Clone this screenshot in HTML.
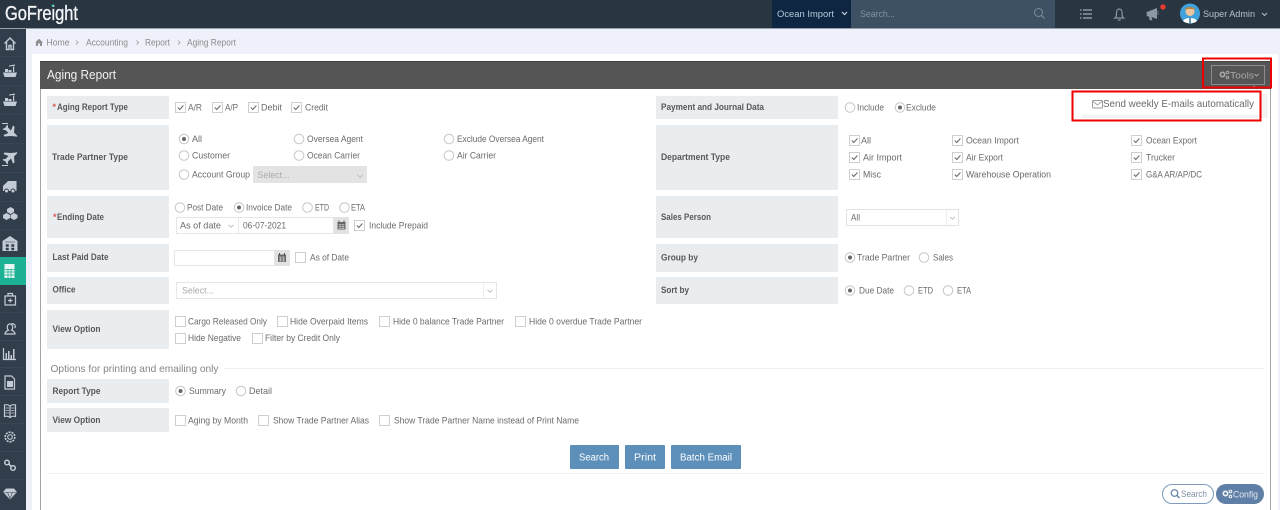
<!DOCTYPE html>
<html lang="en"><head><meta charset="utf-8"><title>Aging Report</title>
<style>
html,body{margin:0;padding:0;width:1280px;height:510px;overflow:hidden;background:#eef1f9}
svg{display:block;filter:blur(.38px)}
text{font-family:"Liberation Sans",sans-serif;font-size:9.2px;fill:#6b6b6b}
.b{font-weight:bold;fill:#585858;font-size:9px}
.n{fill:#c3ccd6;stroke:none}
.l{fill:none;stroke:#c3ccd6;stroke-width:1.2}
.h{fill:none;stroke:#8b98a6;stroke-width:1.2}
</style></head><body>
<svg width="1280" height="510" viewBox="0 0 1280 510" xmlns="http://www.w3.org/2000/svg">
<defs>
<g id="cb"><rect x=".5" y=".5" width="10" height="10" fill="#fff" stroke="#cfcfcf"/><path d="M2.800 5.500l2 2 3.600-4" fill="none" stroke="#666" stroke-width="1"/></g>
<g id="cu"><rect x=".5" y=".5" width="10" height="10" fill="#fff" stroke="#cfcfcf"/></g>
<g id="ru"><circle cx="5.500" cy="5.500" r="4.800" fill="#fff" stroke="#c8c8c8"/></g>
<g id="rc"><circle cx="5.500" cy="5.500" r="4.800" fill="#fff" stroke="#c8c8c8"/><circle cx="5.500" cy="5.500" r="2" fill="#666"/></g>
<g id="cal"><path d="M-4 -3.500h8v7.500h-8z" fill="#666"/><path d="M-3 -1h6M-3 1h6M-3 3h6M-1.500 -1v4.500M1.500 -1v4.500" stroke="#ddd" stroke-width=".6"/><path d="M-2.500 -5v2M2.500 -5v2" stroke="#555" stroke-width="1"/></g>
<g id="dn"><path d="M-2.500 -1.200l2.500 2.500 2.500 -2.500" fill="none" stroke="#b5b5b5" stroke-width=".8"/></g>
<g id="ship"><path class="n" d="M-7 1.500h14l-1.500 4.500h-11zM-5 -2h3v3h-3zM-1.500 -1h3v2h-3zM3 -4.500h1.200v5.500h-1.200zM-1 -5.500l6 -1v1.200l-6 .8z"/></g>
<g id="plane"><path class="n" d="M6 -6.500c1 -.5 1.500 0 1 1l-3 3 .5 6-1.500 1-2 -5-3 3v2l-1 .8-1.500 -2.800-2.800 -1.500.8 -1h2l3 -3-5 -2 1 -1.500 6 .5z"/><path class="n" d="M-8 6h6v1h-6z"/></g>
<g id="gear"><circle cx="-1.500" cy="-.5" r="2.200" fill="none" stroke="currentColor" stroke-width="1.600"/><circle cx="3.500" cy="-2.500" r="1.300" fill="none" stroke="currentColor" stroke-width="1"/><circle cx="3.500" cy="2.500" r="1.300" fill="none" stroke="currentColor" stroke-width="1"/></g>
</defs>

<!-- page background -->
<rect width="1280" height="510" fill="#eef1f9"/>
<!-- top bar -->
<rect width="1280" height="28" fill="#2a3542"/>
<rect y="28" width="1280" height="1" fill="#9aa3ad"/>
<text x="5" y="20" textLength="73" lengthAdjust="spacingAndGlyphs" style="font-size:20px;fill:#f2f4f6;stroke:#f2f4f6;stroke-width:.35">GoFreight</text>
<rect x="51.500" y="4.500" width="2" height="2" fill="#23b3a0"/>
<rect x="772" width="79" height="28" fill="#0f2643"/>
<text x="777" y="17" textLength="57" lengthAdjust="spacingAndGlyphs" style="fill:#b6c8da;font-size:9.500px">Ocean Import</text>
<path d="M842 12l2.500 2.500 2.500-2.500" fill="none" stroke="#c8d4e0" stroke-width="1.200"/>
<rect x="851" width="204" height="28" fill="#3e5064"/>
<text x="860" y="17" textLength="35" lengthAdjust="spacingAndGlyphs" style="fill:#8093a6;font-size:9.500px">Search...</text>
<circle cx="1038.500" cy="12.500" r="4" fill="none" stroke="#7a8b9c" stroke-width="1"/><path d="M1041.500 15.500l3 3" stroke="#7a8b9c" stroke-width="1.200"/>
<path class="h" style="stroke-width:1.500" d="M1083 10h9M1083 14h9M1083 18h9"/><path d="M1080 10h1.500M1080 14h1.500M1080 18h1.500" stroke="#8b98a6" stroke-width="1.500"/>
<path class="h" d="M1115 18c1.500-1 1.500-2.500 1.500-5 0-2.500 1.200-4 2.800-4s2.800 1.500 2.800 4c0 2.500 0 4 1.500 5zM1118 19.500c.5 1 2 1 2.500 0"/>
<path d="M1147 12l10-4v11l-10-3.500z" fill="#8b98a6"/><path d="M1147 12h3v4h-3zM1149 16l1 4h2l-1-3.500M1158 11v4" fill="#8b98a6" stroke="#8b98a6" stroke-width=".6"/>
<circle cx="1163" cy="7" r="2.700" fill="#e8392c"/>
<circle cx="1190" cy="13.500" r="10" fill="#3fa2dc"/><circle cx="1190" cy="11.500" r="4.500" fill="#efc49c"/><path d="M1185 10c0-4 10-4 10 0-3-1.500-7-1.500-10 0z" fill="#b5843f"/><path d="M1183 21c2-4 12-4 14 0-3 3-11 3-14 0z" fill="#fff"/><path d="M1190 18v5" stroke="#2a6f9e" stroke-width="1.500"/>
<text x="1203" y="17" textLength="52" lengthAdjust="spacingAndGlyphs" style="fill:#b7c2cd;font-size:9.500px">Super Admin</text>
<path d="M1262 13l2.500 2.500 2.500-2.500" fill="none" stroke="#b7c2cd" stroke-width="1"/>

<!-- sidebar -->
<rect y="29" width="26" height="481" fill="#333e4d"/>
<path d="M0 56.500h26M0 85.500h26M0 114.500h26M0 143.500h26M0 172.500h26M0 201.500h26M0 229.500h26M0 257.500h26M0 284.500h26M0 312.500h26M0 340.500h26M0 367.500h26M0 395.500h26M0 423.500h26M0 451.500h26M0 479.500h26" stroke="#3b4655" stroke-width="1"/>
<rect y="257" width="26" height="28" fill="#1db195"/>
<path class="l" style="stroke-width:1.400" d="M4.500 43.500l5.500-5.500 5.500 5.500M6.500 42v7.500h2.500v-4h2v4h2.500v-7.500"/>
<use href="#ship" x="10" y="71"/>
<use href="#ship" x="10" y="100"/>
<g transform="translate(10 130) scale(1 -1)"><use href="#plane"/></g>
<use href="#plane" x="10" y="159"/>
<path class="n" d="M8 181h8.500v10h-13.500v-5zM3.500 186l3.500-3.500h.5v3.500z"/><circle cx="6.500" cy="191" r="2" fill="#c3ccd6" stroke="#333e4d"/><circle cx="13" cy="191" r="2" fill="#c3ccd6" stroke="#333e4d"/>
<path class="n" d="M7 209l3.500-2 3.500 2v3l-3.500 2-3.500-2zM3 215l3.500-2 3.500 2v3l-3.500 2-3.500-2zM10.500 215l3.500-2 3.500 2v3l-3.500 2-3.500-2z"/>
<path class="n" d="M2.500 241l7.500-5 7.500 5v10h-15z"/><path d="M5 242h10M6 244.500h2.500v2h-2.500zM11.500 244.500h2.500v2h-2.500zM6 248h2.500v2h-2.500zM11.500 248h2.500v2h-2.500z" fill="#333e4d" stroke="#333e4d" stroke-width=".5"/>
<rect x="4.500" y="264" width="10" height="14" fill="#e9f7f4"/><path d="M5 269.500h9.500M5 272h9.500M5 275h9.500M8 269v9M11 269v9" stroke="#1db195" stroke-width=".8"/>
<path class="l" d="M5 296h10.500v9h-10.500zM8 296v-2.500h4.500v2.500M8 300.500h4.500M10.300 298.500v4"/>
<path class="l" d="M5 334c0-2.500 2-3 3.500-3.800-1.800-1.500-1.800-6.200 1.500-6.200s3.300 4.700 1.500 6.200c1.500.8 3.500 1.300 3.500 3.800zM11 324c3-1 5 1 4 4"/>
<path class="l" d="M3.500 348v11.500h12.500"/><path class="n" d="M5.500 353h1.500v6h-1.500zM8 351h1.500v8h-1.500zM10.500 355h1.500v4h-1.500zM13 349h1.500v10h-1.500z"/>
<path class="l" d="M5 376h6.500l3 3v10h-9.500z"/><rect x="7" y="381" width="6" height="6" fill="#c3ccd6"/>
<path class="l" d="M10 406c-2-1.500-4-1.500-5.500-1v11.500c1.500-.5 3.500-.5 5.500 1 2-1.500 4-1.500 5.500-1v-11.500c-1.500-.5-3.500-.5-5.500 1zM10 406v11.500"/><path d="M5.500 408h3.500M5.500 410.500h3.500M5.500 413h3.500M11 408h3.500M11 410.500h3.500M11 413h3.500" stroke="#c3ccd6" stroke-width=".7"/>
<circle cx="10" cy="437" r="2.300" class="l"/><circle cx="10" cy="437" r="4.800" fill="none" stroke="#c3ccd6" stroke-width="1.600" stroke-dasharray="2 1"/>
<circle cx="7" cy="462.500" r="2.300" class="l" style="stroke-width:1.500"/><circle cx="13" cy="468" r="2.300" class="l" style="stroke-width:1.500"/><path d="M8.500 464l3 2.500" stroke="#c3ccd6" stroke-width="1.500"/>
<path class="n" d="M6 488.500h8l3 3.500-7 7.500-7-7.500z"/><path d="M3.500 492.500h13M7.500 492.500l2.500 6 2.500-6" fill="none" stroke="#333e4d" stroke-width=".6"/>

<!-- breadcrumb -->
<path d="M35 42.500l4-3.800 4 3.800h-1v3.500h-2v-2.500h-2v2.500h-2v-3.500z" fill="#8f8f8f"/>
<text x="46.500" y="45.500" textLength="23" lengthAdjust="spacingAndGlyphs" style="fill:#8b8b8b">Home</text>
<text x="86" y="45.500" textLength="42" lengthAdjust="spacingAndGlyphs" style="fill:#8b8b8b">Accounting</text>
<text x="145" y="45.500" textLength="25" lengthAdjust="spacingAndGlyphs" style="fill:#8b8b8b">Report</text>
<text x="187" y="45.500" textLength="49" lengthAdjust="spacingAndGlyphs" style="fill:#8b8b8b">Aging Report</text>
<path d="M76 40.500l2 2-2 2M136.500 40.500l2 2-2 2M178 40.500l2 2-2 2" fill="none" stroke="#999" stroke-width=".8"/>

<!-- panel -->
<rect x="32" y="54" width="1246" height="456" fill="#fff"/>
<rect x="40" y="61" width="1231" height="28" fill="#555"/>
<rect x="40" y="61" width="1231" height="1" fill="#444"/>
<path d="M40.500 89v421M1270.500 89v421" stroke="#a5a5a5" stroke-width="1"/>
<text x="47" y="79" textLength="69" lengthAdjust="spacingAndGlyphs" style="font-size:12.500px;fill:#f2f2f2">Aging Report</text>

<!-- tools -->
<rect x="1211.500" y="65.500" width="53" height="19" fill="none" stroke="#8c8c8c"/>
<g color="#a9a9a9" transform="translate(1224 75)"><use href="#gear"/></g>
<text x="1230" y="78.500" textLength="24" lengthAdjust="spacingAndGlyphs" style="fill:#a9a9a9;font-size:9.500px">Tools</text>
<path d="M1254.500 74l2 2 2-2" fill="none" stroke="#a9a9a9" stroke-width=".9"/>
<path d="M1252 87l2-1.500 2 1.500z" fill="#bbb"/>

<!-- label cells -->
<g fill="#e9edef">
<rect x="47" y="96" width="122" height="23"/><rect x="47" y="125" width="122" height="65"/><rect x="47" y="196" width="122" height="42"/><rect x="47" y="244" width="122" height="28"/><rect x="47" y="277" width="122" height="27"/><rect x="47" y="310" width="122" height="39"/><rect x="47" y="379" width="122" height="24"/><rect x="47" y="408" width="122" height="24"/>
<rect x="656" y="96" width="182" height="23"/><rect x="656" y="125" width="182" height="65"/><rect x="656" y="196" width="182" height="42"/><rect x="656" y="244" width="182" height="28"/><rect x="656" y="277" width="182" height="27"/>
</g>
<text x="52.500" y="110" style="fill:#e05a5a" class="b">*</text>
<text x="57" y="110" textLength="71" lengthAdjust="spacingAndGlyphs" class="b">Aging Report Type</text>
<text x="52" y="160" textLength="76" lengthAdjust="spacingAndGlyphs" class="b">Trade Partner Type</text>
<text x="53" y="220" style="fill:#e05a5a" class="b">*</text>
<text x="57" y="220" textLength="47" lengthAdjust="spacingAndGlyphs" class="b">Ending Date</text>
<text x="52.500" y="260" textLength="56" lengthAdjust="spacingAndGlyphs" class="b">Last Paid Date</text>
<text x="52.500" y="292.500" textLength="23" lengthAdjust="spacingAndGlyphs" class="b">Office</text>
<text x="52.500" y="332" textLength="48" lengthAdjust="spacingAndGlyphs" class="b">View Option</text>
<text x="52.500" y="394" textLength="48" lengthAdjust="spacingAndGlyphs" class="b">Report Type</text>
<text x="52.500" y="423" textLength="48" lengthAdjust="spacingAndGlyphs" class="b">View Option</text>
<text x="661" y="110" textLength="103" lengthAdjust="spacingAndGlyphs" class="b">Payment and Journal Data</text>
<text x="661" y="160" textLength="69" lengthAdjust="spacingAndGlyphs" class="b">Department Type</text>
<text x="661" y="220" textLength="50" lengthAdjust="spacingAndGlyphs" class="b">Sales Person</text>
<text x="661" y="260.500" textLength="37" lengthAdjust="spacingAndGlyphs" class="b">Group by</text>
<text x="661" y="293" textLength="28" lengthAdjust="spacingAndGlyphs" class="b">Sort by</text>

<!-- Aging report type -->
<use href="#cb" x="175" y="102"/><text x="188" y="110.500" textLength="14" lengthAdjust="spacingAndGlyphs">A/R</text>
<use href="#cb" x="212" y="102"/><text x="225" y="110.500" textLength="13" lengthAdjust="spacingAndGlyphs">A/P</text>
<use href="#cb" x="248" y="102"/><text x="261" y="110.500" textLength="21" lengthAdjust="spacingAndGlyphs">Debit</text>
<use href="#cb" x="291" y="102"/><text x="305" y="110.500" textLength="23" lengthAdjust="spacingAndGlyphs">Credit</text>

<!-- Trade partner type -->
<use href="#rc" x="178.500" y="133.500"/><text x="192" y="142" textLength="10" lengthAdjust="spacingAndGlyphs">All</text>
<use href="#ru" x="293.500" y="133.500"/><text x="307" y="142" textLength="56" lengthAdjust="spacingAndGlyphs">Oversea Agent</text>
<use href="#ru" x="443.500" y="133.500"/><text x="457" y="142" textLength="87" lengthAdjust="spacingAndGlyphs">Exclude Oversea Agent</text>
<use href="#ru" x="178.500" y="150"/><text x="192" y="158.500" textLength="38" lengthAdjust="spacingAndGlyphs">Customer</text>
<use href="#ru" x="293.500" y="150"/><text x="307" y="158.500" textLength="53" lengthAdjust="spacingAndGlyphs">Ocean Carrier</text>
<use href="#ru" x="443.500" y="150"/><text x="457" y="158.500" textLength="39" lengthAdjust="spacingAndGlyphs">Air Carrier</text>
<use href="#ru" x="178.500" y="169"/><text x="192" y="177.500" textLength="58" lengthAdjust="spacingAndGlyphs">Account Group</text>
<rect x="253" y="166" width="114" height="17" fill="#e3e3e3"/>
<text x="257.500" y="178" textLength="32" lengthAdjust="spacingAndGlyphs" style="fill:#aaa">Select...</text>
<use href="#dn" x="360" y="176"/>

<!-- Ending date -->
<use href="#ru" x="174.500" y="202"/><text x="187" y="210.500" textLength="36" lengthAdjust="spacingAndGlyphs">Post Date</text>
<use href="#rc" x="233.500" y="202"/><text x="246" y="210.500" textLength="46" lengthAdjust="spacingAndGlyphs">Invoice Date</text>
<use href="#ru" x="302" y="202"/><text x="315" y="210.500" textLength="14" lengthAdjust="spacingAndGlyphs">ETD</text>
<use href="#ru" x="339" y="202"/><text x="351" y="210.500" textLength="14" lengthAdjust="spacingAndGlyphs">ETA</text>
<rect x="176.500" y="217.500" width="157" height="16" fill="#fff" stroke="#e6e6e6"/>
<path d="M238.500 218v15" stroke="#e6e6e6"/>
<text x="180" y="228.500" textLength="41" lengthAdjust="spacingAndGlyphs">As of date</text>
<use href="#dn" x="231" y="226"/>
<text x="243" y="228.500" textLength="43" lengthAdjust="spacingAndGlyphs">06-07-2021</text>
<rect x="334" y="217" width="15" height="17" fill="#e2e2e2"/>
<use href="#cal" x="341.500" y="225.500"/>
<use href="#cb" x="354" y="220"/><text x="369" y="228.500" textLength="59" lengthAdjust="spacingAndGlyphs">Include Prepaid</text>

<!-- Last paid -->
<rect x="174.500" y="250.500" width="100" height="15" fill="#fff" stroke="#e6e6e6"/>
<rect x="274" y="250" width="16" height="16" fill="#e2e2e2"/>
<use href="#cal" x="282" y="258"/>
<use href="#cu" x="295" y="252"/><text x="310" y="260.500" textLength="39" lengthAdjust="spacingAndGlyphs">As of Date</text>

<!-- Office -->
<rect x="176.500" y="282.500" width="320" height="16" fill="#fff" stroke="#e6e6e6"/>
<path d="M483.500 283v15" stroke="#f0f0f0"/>
<text x="182" y="293.500" textLength="32" lengthAdjust="spacingAndGlyphs" style="fill:#aaa">Select...</text>
<use href="#dn" x="490" y="291"/>

<!-- View option -->
<use href="#cu" x="175" y="316"/><text x="188" y="324.500" textLength="79" lengthAdjust="spacingAndGlyphs">Cargo Released Only</text>
<use href="#cu" x="277" y="316"/><text x="290" y="324.500" textLength="78" lengthAdjust="spacingAndGlyphs">Hide Overpaid Items</text>
<use href="#cu" x="379" y="316"/><text x="393" y="324.500" textLength="111" lengthAdjust="spacingAndGlyphs">Hide 0 balance Trade Partner</text>
<use href="#cu" x="515" y="316"/><text x="529" y="324.500" textLength="113" lengthAdjust="spacingAndGlyphs">Hide 0 overdue Trade Partner</text>
<use href="#cu" x="175" y="333"/><text x="188" y="341" textLength="53" lengthAdjust="spacingAndGlyphs">Hide Negative</text>
<use href="#cu" x="252" y="333"/><text x="265" y="341" textLength="75" lengthAdjust="spacingAndGlyphs">Filter by Credit Only</text>

<!-- Options -->
<text x="50.500" y="372" textLength="168" lengthAdjust="spacingAndGlyphs" style="font-size:10.500px;fill:#858585">Options for printing and emailing only</text>
<path d="M224 368.500h1040" stroke="#eee"/>
<use href="#rc" x="175" y="385.500"/><text x="189" y="394" textLength="37" lengthAdjust="spacingAndGlyphs">Summary</text>
<use href="#ru" x="235.500" y="385.500"/><text x="249" y="394" textLength="23" lengthAdjust="spacingAndGlyphs">Detail</text>
<use href="#cu" x="175" y="415"/><text x="188" y="423.500" textLength="60" lengthAdjust="spacingAndGlyphs">Aging by Month</text>
<use href="#cu" x="258" y="415"/><text x="273" y="423.500" textLength="96" lengthAdjust="spacingAndGlyphs">Show Trade Partner Alias</text>
<use href="#cu" x="379" y="415"/><text x="394" y="423.500" textLength="185" lengthAdjust="spacingAndGlyphs">Show Trade Partner Name instead of Print Name</text>

<!-- Payment -->
<use href="#ru" x="844.500" y="102"/><text x="857" y="110.500" textLength="27" lengthAdjust="spacingAndGlyphs">Include</text>
<use href="#rc" x="894.500" y="102"/><text x="906" y="110.500" textLength="30" lengthAdjust="spacingAndGlyphs">Exclude</text>

<!-- Department -->
<use href="#cb" x="849" y="135"/><text x="861" y="143.500" textLength="10" lengthAdjust="spacingAndGlyphs">All</text>
<use href="#cb" x="952" y="135"/><text x="966" y="143.500" textLength="53" lengthAdjust="spacingAndGlyphs">Ocean Import</text>
<use href="#cb" x="1131" y="135"/><text x="1146" y="143.500" textLength="51" lengthAdjust="spacingAndGlyphs">Ocean Export</text>
<use href="#cb" x="849" y="152"/><text x="863" y="160.500" textLength="39" lengthAdjust="spacingAndGlyphs">Air Import</text>
<use href="#cb" x="952" y="152"/><text x="966" y="160.500" textLength="37" lengthAdjust="spacingAndGlyphs">Air Export</text>
<use href="#cb" x="1131" y="152"/><text x="1146" y="160.500" textLength="29" lengthAdjust="spacingAndGlyphs">Trucker</text>
<use href="#cb" x="849" y="169"/><text x="863" y="177.500" textLength="18" lengthAdjust="spacingAndGlyphs">Misc</text>
<use href="#cb" x="952" y="169"/><text x="966" y="177.500" textLength="85" lengthAdjust="spacingAndGlyphs">Warehouse Operation</text>
<use href="#cb" x="1131" y="169"/><text x="1146" y="177.500" textLength="56" lengthAdjust="spacingAndGlyphs">G&amp;A AR/AP/DC</text>

<!-- Sales -->
<rect x="846.500" y="209.500" width="112" height="16" fill="#fff" stroke="#e2e2e2"/>
<path d="M946.500 210v15" stroke="#eee"/>
<text x="851" y="220.500" textLength="9" lengthAdjust="spacingAndGlyphs">All</text>
<use href="#dn" x="952.500" y="218"/>

<!-- Group/Sort -->
<use href="#rc" x="844.500" y="252"/><text x="857" y="260.500" textLength="53" lengthAdjust="spacingAndGlyphs">Trade Partner</text>
<use href="#ru" x="918.500" y="252"/><text x="933" y="260.500" textLength="20" lengthAdjust="spacingAndGlyphs">Sales</text>
<use href="#rc" x="844.500" y="285"/><text x="859" y="293.500" textLength="35" lengthAdjust="spacingAndGlyphs">Due Date</text>
<use href="#ru" x="903.500" y="285"/><text x="918" y="293.500" textLength="15" lengthAdjust="spacingAndGlyphs">ETD</text>
<use href="#ru" x="942.500" y="285"/><text x="957" y="293.500" textLength="14" lengthAdjust="spacingAndGlyphs">ETA</text>

<!-- Buttons -->
<g fill="#5d8fbb">
<rect x="570" y="445" width="49" height="24" rx="1"/><rect x="625" y="445" width="40" height="24" rx="1"/><rect x="671" y="445" width="70" height="24" rx="1"/>
</g>
<text x="579" y="460.500" textLength="30" lengthAdjust="spacingAndGlyphs" style="fill:#fff;font-size:10px">Search</text>
<text x="634" y="460.500" textLength="22" lengthAdjust="spacingAndGlyphs" style="fill:#fff;font-size:10px">Print</text>
<text x="680" y="460.500" textLength="52" lengthAdjust="spacingAndGlyphs" style="fill:#fff;font-size:10px">Batch Email</text>
<path d="M47 473.500h1217" stroke="#f0f0f0"/>

<rect x="1162.500" y="484.500" width="51" height="19" rx="9.500" fill="#fff" stroke="#7f9bbd"/>
<circle cx="1174.500" cy="493" r="3.300" fill="none" stroke="#5f7fa6" stroke-width="1.200"/><path d="M1177 495.500l2.500 2.500" stroke="#5f7fa6" stroke-width="1.300"/>
<text x="1181" y="497" textLength="26" lengthAdjust="spacingAndGlyphs" style="fill:#7f90a6">Search</text>
<rect x="1216" y="484" width="48" height="20" rx="10" fill="#5f7fa6"/>
<g color="#f2f5f8" transform="translate(1227 494)"><use href="#gear"/></g>
<text x="1233" y="497.500" textLength="25" lengthAdjust="spacingAndGlyphs" style="fill:#e4eaf1">Config</text>

<!-- dropdown -->
<rect x="1082" y="94" width="186" height="24" fill="#f3f3f3"/>
<rect x="1082" y="92" width="179" height="23" fill="#fff"/>
<rect x="1092.500" y="100.500" width="10" height="7.500" rx="1" fill="none" stroke="#999"/><path d="M1093 101.500l4.500 3.500 4.500-3.500" fill="none" stroke="#999" stroke-width=".8"/>
<text x="1103" y="107" textLength="151" lengthAdjust="spacingAndGlyphs" style="font-size:10.200px;fill:#6b6b6b">Send weekly E-mails automatically</text>

<!-- red annotation boxes -->
<rect x="1203" y="58.500" width="68" height="29" fill="none" stroke="#ee0000" stroke-width="2"/>
<rect x="1072.500" y="91.500" width="188" height="29" fill="none" stroke="#ee0000" stroke-width="2"/>
</svg>
</body></html>
